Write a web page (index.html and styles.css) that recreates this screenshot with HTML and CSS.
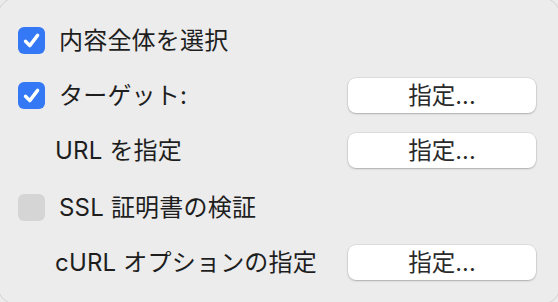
FILE: index.html
```html
<!DOCTYPE html>
<html lang="ja">
<head>
<meta charset="utf-8">
<link rel="stylesheet" href="styles.css">
</head>
<body>
<div class="frame"></div>
<div class="panel">
  <div class="row r1">
    <label class="check">
      <span class="box on"><svg viewBox="0 0 27 27" width="27" height="27"><path d="M7.5 14.2 L11.8 18.6 L19.6 8.4" fill="none" stroke="#fff" stroke-width="3.4" stroke-linecap="round" stroke-linejoin="round"/></svg></span>
      <span class="text">内容全体を選択</span>
    </label>
  </div>
  <div class="row r2">
    <label class="check">
      <span class="box on"><svg viewBox="0 0 27 27" width="27" height="27"><path d="M7.5 14.2 L11.8 18.6 L19.6 8.4" fill="none" stroke="#fff" stroke-width="3.4" stroke-linecap="round" stroke-linejoin="round"/></svg></span>
      <span class="text">ターゲット:</span>
    </label>
    <button class="btn">指定...</button>
  </div>
  <div class="row r3">
    <span class="text indent">URL を指定</span>
    <button class="btn">指定...</button>
  </div>
  <div class="row r4">
    <label class="check">
      <span class="box off"></span>
      <span class="text">SSL 証明書の検証</span>
    </label>
  </div>
  <div class="row r5">
    <span class="text indent">cURL オプションの指定</span>
    <button class="btn">指定...</button>
  </div>
</div>
</body>
</html>
```
FILE: styles.css
```css
html, body {
  margin: 0;
  padding: 0;
  width: 558px;
  height: 302px;
  overflow: hidden;
  background: #ececec;
}
body {
  font-family: "Inter", "Noto Sans CJK JP", sans-serif;
  color: #1e1e1e;
  position: relative;
}
.frame {
  position: absolute;
  left: -3px;
  top: -3px;
  right: -3px;
  bottom: -3px;
  border: 1px solid #d2d2d2;
  border-radius: 20px;
  pointer-events: none;
}
.panel {
  padding: 13px 22px 0 18px;
  display: flex;
  flex-direction: column;
}
.row {
  height: 55px;
  display: flex;
  align-items: center;
  justify-content: space-between;
}
.r4 {
  margin-top: 2px;
}
.check {
  display: flex;
  align-items: center;
  gap: 14px;
}
.box {
  width: 27px;
  height: 27px;
  border-radius: 6px;
  display: block;
  flex: none;
}
.box svg {
  display: block;
}
.box.on {
  background: #3478f6;
}
.box.off {
  background: #d5d5d5;
}
.text {
  font-size: 24px;
  line-height: 28px;
  letter-spacing: 0.2px;
}
.indent {
  padding-left: 37px;
}
.btn {
  width: 188px;
  height: 35px;
  border: none;
  border-radius: 8px;
  background: #ffffff;
  box-shadow: 0 0 0 0.5px rgba(0,0,0,0.12), 0 1px 2px rgba(0,0,0,0.22);
  font-family: "Inter", "Noto Sans CJK JP", sans-serif;
  font-size: 23.5px;
  color: #2a2a2a;
  padding: 0;
  line-height: 35px;
}
```
